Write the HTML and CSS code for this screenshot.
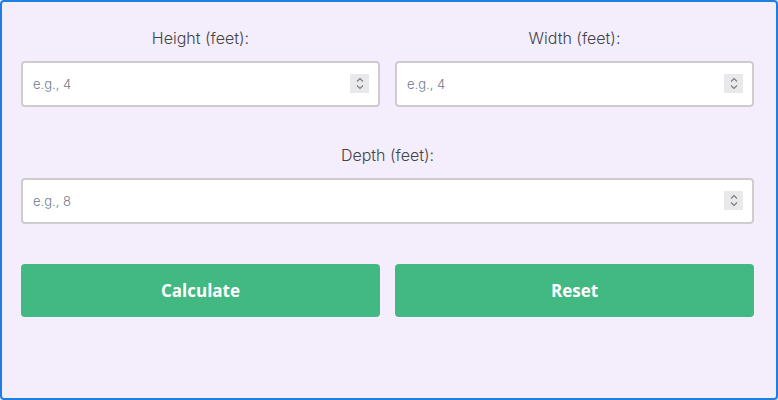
FILE: index.html
```html
<!DOCTYPE html>
<html lang="en">
<head>
    <meta charset="UTF-8">
    <meta name="viewport" content="width=device-width, initial-scale=1.0">
    <title>Volume Calculator</title>
    <link rel="stylesheet" href="styles.css">
</head>
<body>
    <div class="container">
        <div class="row">
            <div class="field">
                <label for="height">Height (feet):</label>
                <div class="input-wrap">
                    <input type="number" id="height" placeholder="e.g., 4">
                    <span class="spinner"><svg width="8" height="13" viewBox="0 0 8 13"><path d="M1 4.5 L4 1.5 L7 4.5 M1 8.5 L4 11.5 L7 8.5" fill="none" stroke="#7a7a7a" stroke-width="1.1"/></svg></span>
                </div>
            </div>
            <div class="field">
                <label for="width">Width (feet):</label>
                <div class="input-wrap">
                    <input type="number" id="width" placeholder="e.g., 4">
                    <span class="spinner"><svg width="8" height="13" viewBox="0 0 8 13"><path d="M1 4.5 L4 1.5 L7 4.5 M1 8.5 L4 11.5 L7 8.5" fill="none" stroke="#7a7a7a" stroke-width="1.1"/></svg></span>
                </div>
            </div>
        </div>

        <div class="field">
            <label for="depth">Depth (feet):</label>
            <div class="input-wrap">
                <input type="number" id="depth" placeholder="e.g., 8">
                <span class="spinner"><svg width="8" height="13" viewBox="0 0 8 13"><path d="M1 4.5 L4 1.5 L7 4.5 M1 8.5 L4 11.5 L7 8.5" fill="none" stroke="#7a7a7a" stroke-width="1.1"/></svg></span>
            </div>
        </div>

        <div class="buttons">
            <button class="btn">Calculate</button>
            <button class="btn">Reset</button>
        </div>
    </div>
</body>
</html>
```

FILE: styles.css
```css
html, body {
    margin: 0;
    height: 100%;
}
body {
    font-family: Inter, "Noto Sans", sans-serif;
    background-color: #f3edfc;
}
.container {
    box-sizing: border-box;
    height: 400px;
    width: 778px;
    border: 2px solid #1e7ee4;
    border-radius: 4px;
    background-color: #f3edfc;
    padding: 24px 22px 0 19px;
}
.row {
    display: grid;
    grid-template-columns: 1fr 1fr;
    gap: 15px;
}
.field {
    margin-bottom: 36px;
}
.field label {
    display: block;
    text-align: center;
    font-size: 16px;
    font-weight: 300;
    line-height: 24px;
    color: #444;
    margin-bottom: 11px;
}
.input-wrap {
    position: relative;
}
.input-wrap input {
    box-sizing: border-box;
    width: 100%;
    height: 46px;
    border: 2px solid #cfcccf;
    border-radius: 4px;
    background: white;
    padding: 0 12px 0 10px;
    font-family: Inter, "Noto Sans", sans-serif;
    font-size: 13px;
    outline: none;
    -moz-appearance: textfield;
}
.input-wrap input::-webkit-inner-spin-button,
.input-wrap input::-webkit-outer-spin-button {
    -webkit-appearance: none;
    margin: 0;
}
.input-wrap input::placeholder {
    color: #6e7b8c;
    font-weight: 300;
}
.spinner {
    position: absolute;
    right: 11px;
    top: 13px;
    width: 19px;
    height: 19px;
    background-color: #e9e9ec;
    display: flex;
    align-items: center;
    justify-content: center;
}
.buttons {
    display: grid;
    grid-template-columns: 1fr 1fr;
    gap: 15px;
    margin-top: 40px;
}
.btn {
    height: 53px;
    border: none;
    border-radius: 4px;
    background-color: #42b883;
    color: white;
    font-family: "Open Sans", sans-serif;
    font-size: 17px;
    font-weight: 700;
    cursor: pointer;
}
```
